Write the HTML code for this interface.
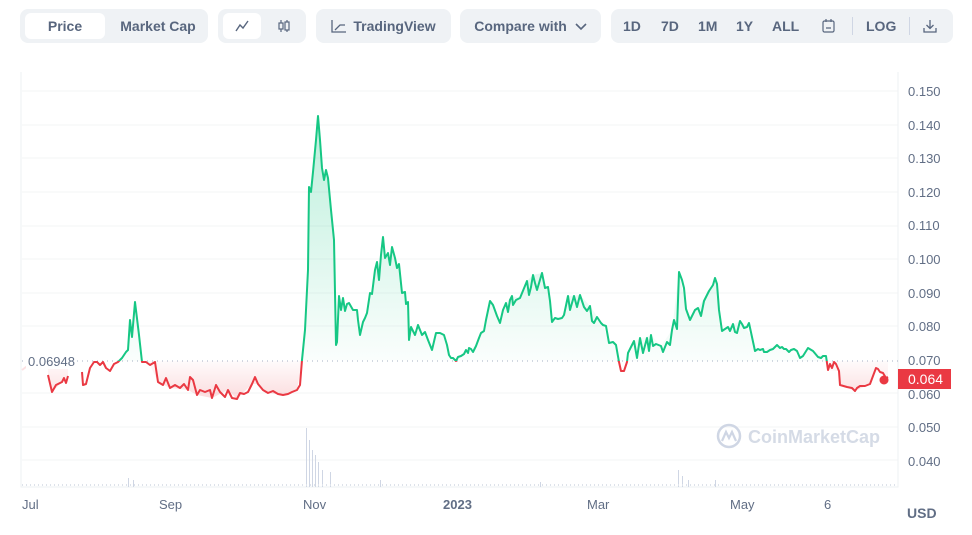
<!DOCTYPE html><html><head><style>
body{margin:0;width:972px;height:535px;background:#fff;font-family:"Liberation Sans",sans-serif;overflow:hidden;position:relative}
.g{position:absolute;top:9px;height:34px;background:#eff2f5;border-radius:8px}
.b{position:absolute;top:4px;height:26px;line-height:26px;font-size:14px;color:#58667e;text-align:center;border-radius:6px;font-weight:bold}
.w{background:#fff;color:#58667e}
.t{position:absolute;font-size:13px;color:#616e85}
</style></head><body>
<div class="g" style="left:20px;width:188px"><div class="b w" style="left:5px;width:80px">Price</div><div class="b" style="left:90px;width:96px">Market Cap</div></div>
<div class="g" style="left:218px;width:88px"><div class="b w" style="left:5px;width:38px"><svg width="14" height="14" viewBox="0 0 14 14" style="margin-top:6px"><path d="M1 12L5 6L8 9L13 2" fill="none" stroke="#58667e" stroke-width="1.4"/></svg></div><div class="b" style="left:50px;width:34px"><svg width="16" height="14" viewBox="0 0 16 14" style="margin-top:6px"><path d="M4 1v12M10 1v12" stroke="#58667e" stroke-width="1.2"/><rect x="2" y="4" width="4" height="6" fill="#eff2f5" stroke="#58667e" stroke-width="1.2"/><rect x="8" y="3" width="4" height="8" fill="#eff2f5" stroke="#58667e" stroke-width="1.2"/></svg></div></div>
<div class="g" style="left:316px;width:135px"><div class="b" style="left:0;width:135px"><svg width="16" height="14" viewBox="0 0 16 14" style="vertical-align:-2px;margin-right:6px"><path d="M1 1v12h14M4 11L9 6h5" fill="none" stroke="#58667e" stroke-width="1.3"/></svg>TradingView</div></div>
<div class="g" style="left:460px;width:141px"><div class="b" style="left:0;width:141px">Compare with <svg width="12" height="8" viewBox="0 0 12 8" style="margin-left:4px"><path d="M1 1l5 5 5-5" fill="none" stroke="#58667e" stroke-width="1.6"/></svg></div></div>
<div class="g" style="left:611px;width:342px">
<div class="b" style="left:12px">1D</div><div class="b" style="left:50px">7D</div><div class="b" style="left:87px">1M</div><div class="b" style="left:125px">1Y</div><div class="b" style="left:161px">ALL</div>
<svg style="position:absolute;left:211px;top:10px" width="13" height="14" viewBox="0 0 13 14"><rect x="1" y="2" width="11" height="11" rx="1.5" fill="none" stroke="#58667e" stroke-width="1.2"/><path d="M4 0v3M9 0v3M4 9h5" stroke="#58667e" stroke-width="1.2"/></svg>
<div style="position:absolute;left:241px;top:8px;width:1px;height:18px;background:#cfd6e4"></div>
<div class="b" style="left:255px">LOG</div>
<div style="position:absolute;left:298px;top:8px;width:1px;height:18px;background:#cfd6e4"></div>
<svg style="position:absolute;left:312px;top:10px" width="14" height="14" viewBox="0 0 14 14"><path d="M7 1v8M3.5 6L7 9.5 10.5 6M1 9v4h12V9" fill="none" stroke="#58667e" stroke-width="1.3"/></svg>
</div>
<svg width="972" height="535" style="position:absolute;left:0;top:0">
<defs>
<linearGradient id="gg" x1="0" y1="110" x2="0" y2="361" gradientUnits="userSpaceOnUse"><stop offset="0" stop-color="#16c784" stop-opacity=".3"/><stop offset="1" stop-color="#16c784" stop-opacity=".02"/></linearGradient>
<linearGradient id="rg" x1="0" y1="361" x2="0" y2="400" gradientUnits="userSpaceOnUse"><stop offset="0" stop-color="#ea3943" stop-opacity=".02"/><stop offset="1" stop-color="#ea3943" stop-opacity=".18"/></linearGradient>
<clipPath id="up"><rect x="0" y="0" width="972" height="361"/></clipPath>
<clipPath id="dn"><rect x="0" y="361" width="972" height="200"/></clipPath>
<path id="ln" d="M48 375L52 392L56 385L62 382L64 378L66 383L68 376M82 372L83 385L86 384L90 368L94 362L97 362L100 365L103 362L106 368L110 371L114 364L118 362L122 358L126 352L128 350L130 320L132 337L135 302L139 335L142 362L146 362L150 365L155 362L158 382L163 385L166 378L170 388L175 385L180 388L184 384L188 390L190 377L193 380L197 395L200 390L205 392L210 390L212 398L216 385L220 392L225 397L228 390L232 398L237 399L240 393L244 394L248 392L252 384L255 377L258 384L263 390L268 393L273 391L278 394L283 395L288 394L292 392L297 390L300 385L302 360L305 330L308 270L309 187L311 192L313 172L316 140L318 116L320 140L322 168L324 180L326 170L328 178L331 210L332 220L334 240L336 345L337 342L339 296L341 310L343 298L345 311L347 304L349 303L353 310L357 310L358 320L360 335L363 322L365 318L367 313L370 293L372 294L375 270L377 262L379 280L381 255L383 237L385 258L388 253L390 265L392 247L395 258L397 268L399 264L402 293L405 292L406 304L408 302L409 340L411 327L415 335L418 325L422 335L425 332L428 340L432 350L436 333L440 333L444 335L447 345L449 355L451 358L453 358L456 361L458 357L461 356L464 354L466 350L468 353L469 348L471 349L473 352L476 346L479 338L481 333L484 331L486 320L490 301L493 305L497 316L500 323L503 310L506 303L508 312L510 300L512 296L513 305L516 300L520 298L527 281L529 295L531 287L533 275L535 283L537 290L542 273L545 288L548 287L550 301L552 322L555 318L558 319L562 318L564 315L568 296L570 310L574 296L577 307L580 295L584 307L587 311L590 306L592 321L594 323L597 317L601 323L603 325L606 326L609 343L613 342L616 345L619 362L621 371L624 371L627 362L628 353L634 341L637 358L640 338L643 353L647 338L649 351L651 335L653 346L656 344L661 346L663 352L667 342L670 345L672 330L674 320L677 329L679 272L682 280L684 288L686 309L690 320L695 310L698 308L701 316L704 301L707 295L709 291L713 285L715 278L717 284L719 310L722 331L725 329L728 327L730 331L733 324L735 332L737 333L740 321L742 324L744 328L747 327L749 323L752 337L755 351L758 349L760 350L763 349L764 352L767 352L770 350L773 349L777 345L780 348L782 347L784 349L786 349L789 352L791 350L794 349L797 351L800 358L803 356L808 348L813 351L818 357L821 358L823 356L826 356L828 370L830 364L832 368L834 362L836 364L839 371L840 385L847 387L852 388L855 391L857 388L860 386L865 386L870 384L873 376L876 368L878 369L880 372L883 373L886 378L888 377"/>
</defs>
<g stroke="#f3f4f6" stroke-width="1">
<path d="M22 91H898M22 125H898M22 158H898M22 192H898M22 226H898M22 259H898M22 293H898M22 326H898M22 393H898M22 427H898M22 460H898"/>
</g>
<path d="M21 72V487H898V72" fill="none" stroke="#eef0f3"/>
<path d="M22 361H898" stroke="#a6b0c3" stroke-dasharray="1 4"/>
<g fill="#cfd6e4" stroke="none">
<rect x="306" y="428" width="1" height="59"/><rect x="309" y="440" width="1" height="47"/><rect x="312" y="450" width="1" height="37"/><rect x="315" y="455" width="1" height="32"/><rect x="318" y="462" width="1" height="25"/><rect x="322" y="470" width="1" height="17"/><rect x="330" y="472" width="1" height="15"/><rect x="128" y="478" width="1" height="9"/><rect x="133" y="480" width="1" height="7"/><rect x="678" y="470" width="1" height="17"/><rect x="682" y="476" width="1" height="11"/><rect x="688" y="480" width="1" height="7"/><rect x="715" y="480" width="1" height="7"/><rect x="380" y="480" width="1" height="7"/><rect x="540" y="482" width="1" height="5"/>
</g>
<path d="M22 485H898" stroke="#dde2ea" stroke-dasharray="1 3" stroke-width="2"/>
<path clip-path="url(#up)" d="M82 372L86 384L90 368L94 362L97 362L100 365L103 362L106 368L110 371L114 364L118 362L122 358L126 352L128 350L130 320L132 337L135 302L139 335L142 362ZM302 360L305 330L308 270L309 187L311 192L313 172L316 140L318 116L320 140L322 168L324 180L326 170L328 178L331 210L332 220L334 240L336 345L337 342L339 296L341 310L343 298L345 311L347 304L349 303L353 310L357 310L358 320L360 335L363 322L365 318L367 313L370 293L372 294L375 270L377 262L379 280L381 255L383 237L385 258L388 253L390 265L392 247L395 258L397 268L399 264L402 293L405 292L406 304L408 302L409 340L411 327L415 335L418 325L422 335L425 332L428 340L432 350L436 333L440 333L444 335L447 345L449 355L456 361L466 350L476 346L484 331L490 301L500 323L506 303L512 296L520 298L527 281L533 275L542 273L550 301L552 322L562 318L568 296L580 295L590 306L603 325L609 343L616 345L619 361L627 361L634 341L651 335L661 346L672 330L679 272L686 309L690 320L698 308L709 291L715 278L719 310L722 331L740 321L752 337L755 351L777 345L800 358L808 348L826 356L828 361Z" fill="url(#gg)"/>
<path clip-path="url(#dn)" d="M48 361L48 375L52 392L62 382L68 376L68 361ZM142 361L150 365L158 382L170 388L188 390L197 395L212 398L228 390L237 399L252 384L258 384L268 393L283 395L297 390L302 361ZM828 361L828 370L839 371L840 385L855 391L870 384L876 368L888 377L888 361Z" fill="url(#rg)"/>
<use href="#ln" clip-path="url(#up)" fill="none" stroke="#16c784" stroke-width="2" stroke-linejoin="round"/>
<use href="#ln" clip-path="url(#dn)" fill="none" stroke="#ea3943" stroke-width="2" stroke-linejoin="round"/>
<path d="M22 370L30 364L40 368L48 366" fill="none" stroke="#ea3943" stroke-opacity=".15" stroke-width="2"/>
<circle cx="884" cy="380" r="4.5" fill="#ea3943"/>
<circle cx="729" cy="436" r="11" fill="none" stroke="#cfd6e4" stroke-width="2.5"/><path d="M722 441L726 432L729 438L732 432L736 441" fill="none" stroke="#cfd6e4" stroke-width="2.2"/>
<text x="748" y="443" font-family="Liberation Sans" font-size="18" font-weight="bold" fill="#d5dbe6">CoinMarketCap</text>
</svg>
<div class="t" style="left:26px;top:354px;background:#fff;padding:0 2px">0.06948</div>
<div class="t" style="left:908px;top:84px">0.150</div><div class="t" style="left:908px;top:118px">0.140</div><div class="t" style="left:908px;top:151px">0.130</div><div class="t" style="left:908px;top:185px">0.120</div><div class="t" style="left:908px;top:218px">0.110</div><div class="t" style="left:908px;top:252px">0.100</div><div class="t" style="left:908px;top:286px">0.090</div><div class="t" style="left:908px;top:319px">0.080</div><div class="t" style="left:908px;top:353px">0.070</div><div class="t" style="left:908px;top:387px">0.060</div><div class="t" style="left:908px;top:420px">0.050</div><div class="t" style="left:908px;top:454px">0.040</div>
<div style="position:absolute;left:898px;top:369px;width:53px;height:20px;background:#ea3943;color:#fff;font-size:14px;line-height:20px;padding-left:10px;box-sizing:border-box">0.064</div>
<div class="t" style="left:22px;top:497px">Jul</div><div class="t" style="left:159px;top:497px">Sep</div><div class="t" style="left:303px;top:497px">Nov</div><div class="t" style="left:443px;top:497px;font-weight:bold">2023</div><div class="t" style="left:587px;top:497px">Mar</div><div class="t" style="left:730px;top:497px">May</div><div class="t" style="left:824px;top:497px">6</div>
<div class="t" style="left:907px;top:505px;font-weight:bold;font-size:14px">USD</div>
</body></html>
